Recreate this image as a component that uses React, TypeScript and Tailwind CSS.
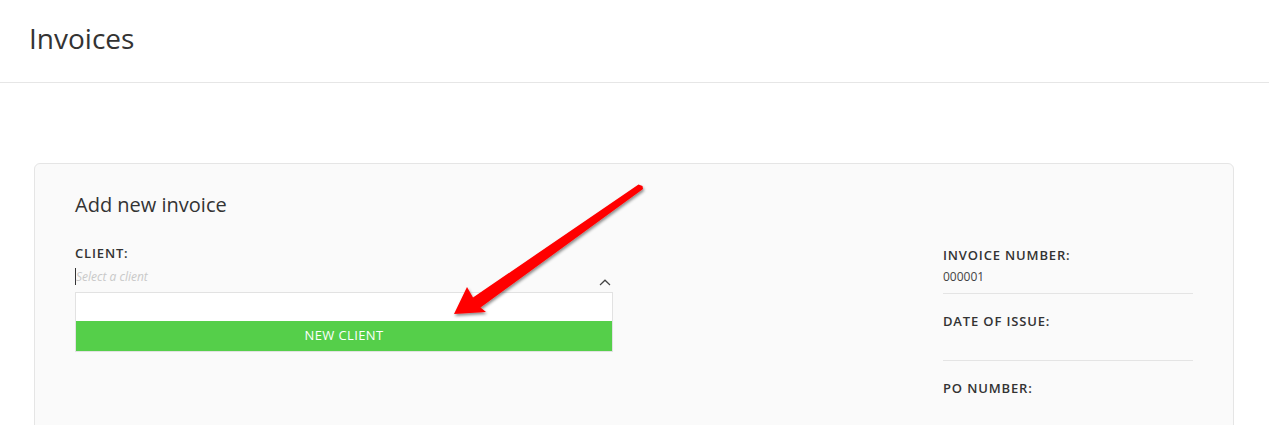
import React from 'react';

const font = { fontFamily: '"Open Sans", "Noto Sans", Arial, sans-serif' };

function Arrow() {
  return (
    <svg
      className="pointer-events-none absolute left-0 top-0"
      width="1269"
      height="425"
      viewBox="0 0 1269 425"
    >
      <defs>
        <filter id="arrowShadow" x="-20%" y="-20%" width="140%" height="140%">
          <feDropShadow dx="1" dy="2" stdDeviation="1.6" floodColor="#000" floodOpacity="0.45" />
        </filter>
      </defs>
      <polygon
        points="454,314 467,287 473,297.5 638.5,184.5 642.5,186 643,189 480.5,307.5 486,312"
        fill="#ff0000"
        filter="url(#arrowShadow)"
      />
    </svg>
  );
}

function Label({ children }: { children: React.ReactNode }) {
  return (
    <div className="text-[13px] font-semibold tracking-[0.065em] text-[#333] leading-[18px]">{children}</div>
  );
}

export default function App() {
  return (
    <div className="relative h-[425px] w-[1269px] overflow-hidden bg-white" style={font}>
      <header className="h-[83px] border-b border-[#e6e6e6] pl-[29px] pt-[19px]">
        <h1 className="text-[28px] leading-[38px] text-[#333]">Invoices</h1>
      </header>

      <div className="px-[34px] pt-[80px]">
        <div className="h-[300px] w-[1200px] rounded-[6px] border border-[#e5e5e5] bg-[#fafafa] px-[40px] pt-[27px]">
          <h2 className="text-[20px] leading-[28px] text-[#333]">Add new invoice</h2>

          <div className="mt-[25px] flex justify-between">
            <div className="w-[538px]">
              <Label>CLIENT:</Label>
              <div className="relative mt-[5px] flex h-[19px] items-center">
                <span className="h-[17px] w-px bg-[#333]" />
                <span className="text-[12px] italic text-[#c9c9c9]">Select a client</span>
                <svg className="absolute right-[2px] top-[12px]" width="12" height="7" viewBox="0 0 12 7">
                  <path d="M1 6 L6 1.2 L11 6" fill="none" stroke="#444" strokeWidth="1.2" />
                </svg>
              </div>
              <div className="mt-[6px] border border-[#e2e2e2] bg-white">
                <div className="h-[28px]" />
                <div className="flex h-[30px] items-center justify-center bg-[#55cf4a] text-[13px] tracking-[0.03em] text-white">
                  NEW CLIENT
                </div>
              </div>
            </div>

            <div className="mt-[2px] w-[250px]">
              <div className="border-b border-[#e4e4e4]">
                <Label>INVOICE NUMBER:</Label>
                <div className="h-[29px] pt-[4px] text-[12px] text-[#444]">000001</div>
              </div>
              <div className="pt-[18px]">
                <div className="border-b border-[#e4e4e4]">
                  <Label>DATE OF ISSUE:</Label>
                  <div className="h-[30px]" />
                </div>
              </div>
              <div className="pt-[18px]">
                <Label>PO NUMBER:</Label>
              </div>
            </div>
          </div>
        </div>
      </div>

      <Arrow />
    </div>
  );
}
